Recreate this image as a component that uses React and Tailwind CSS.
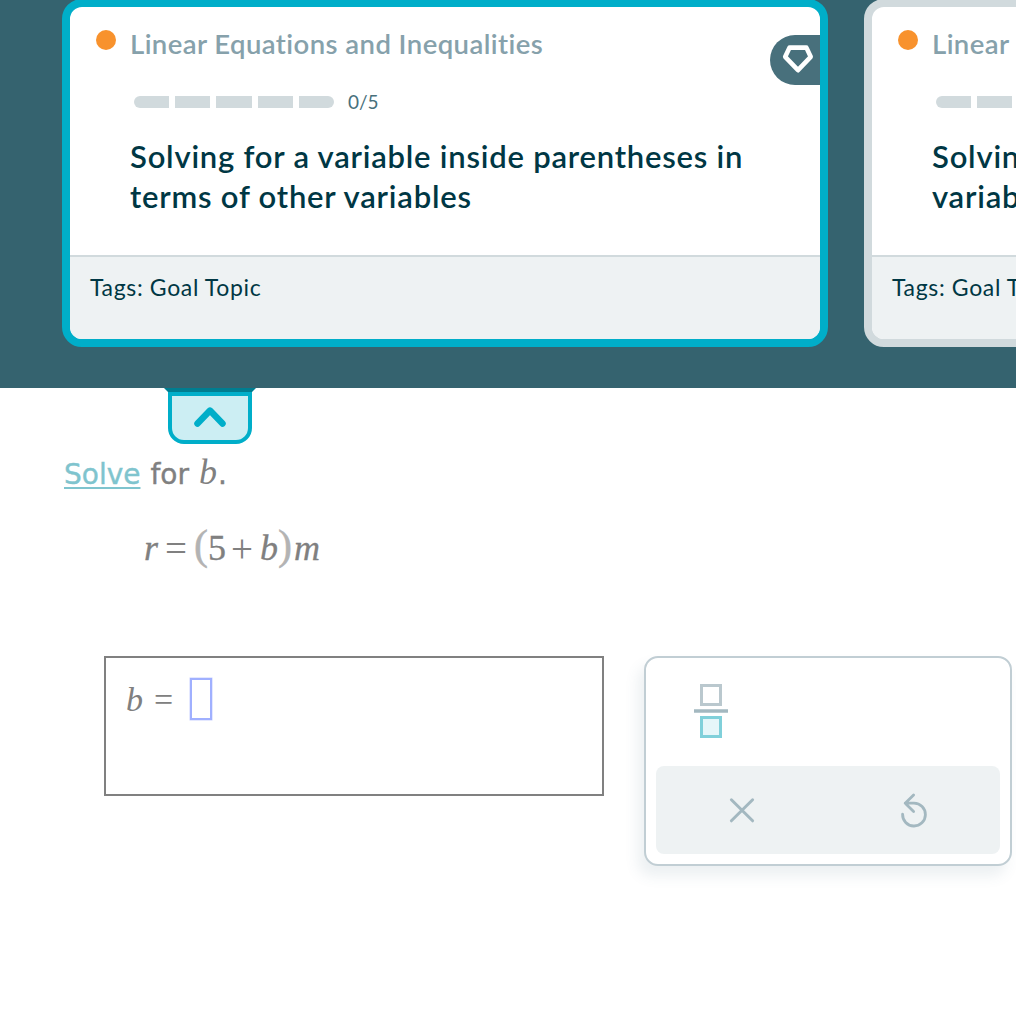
import React from "react";

function Progress() {
  return (
    <div className="flex h-3 w-[200px] gap-1.5 overflow-hidden rounded-full">
      {[0, 1, 2, 3, 4].map((i) => (
        <span key={i} className="h-3 flex-1 bg-[#d1dadd]" />
      ))}
    </div>
  );
}

function GemBadge() {
  return (
    <div className="absolute top-[28px] right-0 h-[50px] w-[50px] rounded-l-full bg-[#48707c]">
      <svg className="h-[50px] w-[50px]" viewBox="0 0 50 50" fill="none" stroke="#fff" strokeWidth="4.6" strokeLinejoin="round">
        <path d="M19.6 12.6H36.4L40.7 21.8L28 35.2L15.2 21.8Z" />
      </svg>
    </div>
  );
}

function TopicCard({ active, lines }) {
  return (
    <article
      className={
        "relative flex h-[348px] w-[766px] shrink-0 flex-col overflow-hidden rounded-[20px] border-8 bg-white whitespace-nowrap " +
        (active ? "border-[#00aec9]" : "border-[#d1dadd]")
      }
    >
      <div className="flex h-[250px] gap-[14px] border-b-2 border-[#d1dadd] pt-[23px] pl-[26px]">
        <span className="h-5 w-5 shrink-0 rounded-full bg-[#f8922d]" />
        <div>
          <p className="h-7 text-[27.5px] leading-7 font-semibold tracking-[0.43px] text-[#86a1ab]">
            Linear Equations and Inequalities
          </p>
          <div className="mt-5 ml-1 flex h-12 items-center gap-[14px]">
            <Progress />
            <span className="text-[19px] text-[#48707c]">0/5</span>
          </div>
          <h2 className="mt-[10px] text-[31px] leading-10 font-semibold tracking-[0.78px] text-[#003744]">
            {lines.map((l) => (
              <span key={l} className="block">{l}</span>
            ))}
          </h2>
        </div>
      </div>
      <footer className="flex-1 bg-[#eef2f3] pt-[14px] pl-5 text-[23px] leading-8 tracking-[0.65px] text-[#003744]">
        Tags: Goal Topic
      </footer>
      {active && <GemBadge />}
    </article>
  );
}

function CollapseTab() {
  return (
    <button className="ml-[164px] block h-14 w-[92px]" aria-label="Collapse">
      <svg className="h-14 w-[92px]" viewBox="0 0 92 56" fill="none">
        <path d="M6 6H86V40A14 14 0 0 1 72 54H20A14 14 0 0 1 6 40Z" fill="#cceef3" stroke="#00aec9" strokeWidth="4" />
        <path d="M0 0H92L88 4H4Z" fill="#007d90" />
        <path d="M33.5 35.6L46 22.6L58.5 35.6" stroke="#00aec9" strokeWidth="6.5" strokeLinecap="round" strokeLinejoin="round" />
      </svg>
    </button>
  );
}

function Keypad() {
  return (
    <section className="flex h-[210px] w-[368px] flex-col rounded-[14px] border-2 border-[#c1ced4] bg-white p-[10px] shadow-[-6px_10px_14px_rgba(72,112,124,0.10)]">
      <div className="flex h-[98px] flex-col pt-4 pl-[38px]">
        <svg className="h-[54px] w-[34px]" viewBox="0 0 34 54" fill="none">
          <path d="M7.5 1.5H26.5V20.5H7.5Z" stroke="#bac8ce" strokeWidth="3" />
          <path d="M0 27H34" stroke="#a3b8c0" strokeWidth="3.4" />
          <path d="M7.5 33.5H26.5V52.5H7.5Z" fill="#e5f6f9" stroke="#80d0da" strokeWidth="3" />
        </svg>
      </div>
      <div className="grid h-[88px] grid-cols-2 place-items-center rounded-lg bg-[#eef2f3]">
        <svg className="h-9 w-9" viewBox="0 0 36 36" fill="none" stroke="#a3b8c0" strokeWidth="3" strokeLinecap="round">
          <path d="M7.4 7.8L28.6 28.8M28.6 7.8L7.4 28.8" />
        </svg>
        <svg className="h-9 w-9" viewBox="0 0 36 36" fill="none" stroke="#a3b8c0" strokeWidth="2.8" strokeLinecap="round" strokeLinejoin="round">
          <path d="M17.6 3L9.2 11.2L17.6 19.4M9.2 11.2H18A11.4 11.4 0 1 1 6.6 22.2" />
        </svg>
      </div>
    </section>
  );
}

export default function App() {
  return (
    <main className="h-[1014px] w-[1016px] overflow-hidden bg-white font-['Lato',sans-serif]">
      <header className="h-[388px] overflow-hidden bg-[#35636f] pl-[62px]">
        <div className="-mt-px flex gap-9">
          <TopicCard active lines={["Solving for a variable inside parentheses in", "terms of other variables"]} />
          <TopicCard lines={["Solving for a variable in terms of other", "variables using addition"]} />
        </div>
      </header>
      <CollapseTab />
      <div className="ml-16 h-[212px] whitespace-pre text-[#808080]">
        <p className="flex h-14 items-baseline pt-[8px] font-['DejaVu_Sans',sans-serif] text-[28px] leading-10 [-webkit-text-stroke:0.4px]">
          <a className="text-[#7fc4ce] underline decoration-2 underline-offset-[3px]">Solve</a>
          <span className="ml-[10px]">for</span>
          <i className="ml-[10px] font-['Liberation_Serif',serif] text-[36px] [-webkit-text-stroke:0]">b</i>
          <span className="ml-px">.</span>
        </p>
        <p className="ml-20 flex h-[100px] items-baseline pt-[26px] font-['Liberation_Serif',serif] text-[36px] leading-10">
          <i className="[-webkit-text-stroke:0.3px]">r</i>
          <span className="ml-[7px] translate-y-0.5 text-[39px]">=</span>
          <span className="ml-[7px] w-[14px] -translate-y-px text-[42px] text-[#b3b3b3] [-webkit-text-stroke:0.5px]">(</span>
          <span className="[-webkit-text-stroke:0.3px]">5</span>
          <span className="ml-[5px] translate-y-0.5 text-[39px]">+</span>
          <i className="ml-[7px] [-webkit-text-stroke:0.3px]">b</i>
          <span className="w-[16px] -translate-y-px text-[42px] text-[#b3b3b3] [-webkit-text-stroke:0.5px]">)</span>
          <i className="[-webkit-text-stroke:0.3px]">m</i>
        </p>
      </div>
      <div className="flex items-start gap-10 pl-[104px]">
        <section className="flex h-[140px] w-[500px] items-start border-2 border-[#808080] pt-5 pl-5 text-[#808080]">
          <div className="-mt-px flex items-baseline font-['Liberation_Serif',serif] text-[34px] leading-[46px]">
            <i>b</i>
            <span className="ml-[11px]">=</span>
          </div>
          <span className="ml-[17px] h-[42px] w-[22px] border-2 border-[#a0b0ff] shadow-[0_0_0_0.5px_#c8d1ff]" />
        </section>
        <Keypad />
      </div>
    </main>
  );
}
